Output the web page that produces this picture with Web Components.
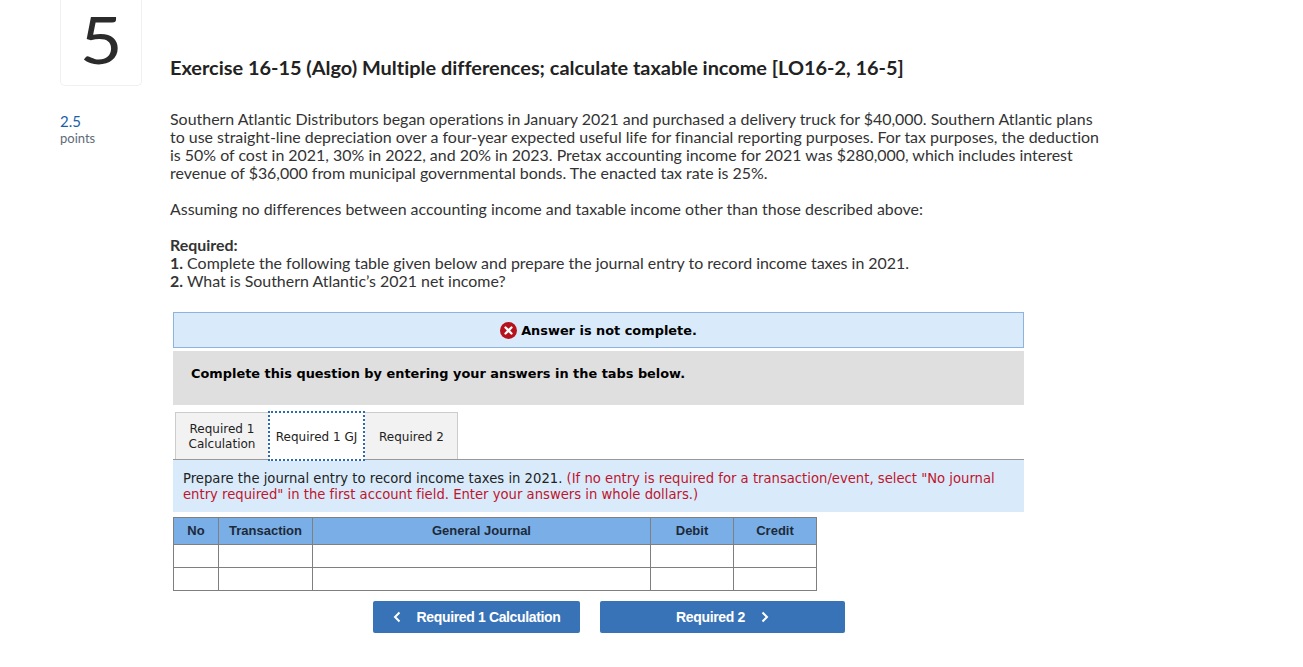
<!DOCTYPE html>
<html>
<head>
<meta charset="utf-8">
<title>Exercise 16-15</title>
<style>
  html, body { margin: 0; background: #fff; }
  body { font-family: "Lato", "Open Sans", sans-serif; font-variant-ligatures: none; color: #333; overflow: hidden; }
</style>
</head>
<body>
<question-page>
  <question-side slot="side" number="5" value="2.5"></question-side>
  <span slot="title">Exercise 16-15 (Algo) Multiple differences; calculate taxable income [LO16-2, 16-5]</span>
  <question-text>
    <p>Southern Atlantic Distributors began operations in January 2021 and purchased a delivery truck for $40,000. Southern Atlantic plans<br>to use straight-line depreciation over a four-year expected useful life for financial reporting purposes. For tax purposes, the deduction<br>is 50% of cost in 2021, 30% in 2022, and 20% in 2023. Pretax accounting income for 2021 was $280,000, which includes interest<br>revenue of $36,000 from municipal governmental bonds. The enacted tax rate is 25%.</p>
    <p>Assuming no differences between accounting income and taxable income other than those described above:</p>
    <p><b>Required:</b><br><b>1.</b> Complete the following table given below and prepare the journal entry to record income taxes in 2021.<br><b>2.</b> What is Southern Atlantic’s 2021 net income?</p>
  </question-text>
  <answer-panel>
    <answer-tabs></answer-tabs>
    <journal-table></journal-table>
  </answer-panel>
</question-page>

<script>
class QuestionPage extends HTMLElement {
  constructor() {
    super();
    this.attachShadow({ mode: 'open' });
    this.shadowRoot.innerHTML = `
    <style>
      :host { display: grid; grid-template-columns: 110px 960px; padding-left: 60px; }
      .title {
        margin: 56px 0 0;
        height: 54px;
        font-size: 19.9px;
        line-height: 23px;
        font-weight: 700;
        color: #222;
      }
    </style>
    <div><slot name="side"></slot></div>
    <div>
      <h1 class="title"><slot name="title"></slot></h1>
      <slot></slot>
    </div>
    `;
  }
}

class QuestionSide extends HTMLElement {
  constructor() {
    super();
    this.attachShadow({ mode: 'open' });
    this.shadowRoot.innerHTML = `
    <style>
      :host { display: block; width: 82px; }
      .number {
        box-sizing: border-box;
        height: 86px;
        padding-bottom: 8px;
        display: flex;
        align-items: center;
        justify-content: center;
        border: 1px solid #f0f0f0;
        border-top: 0;
        border-radius: 0 0 5px 5px;
        font-size: 66px;
        color: #2b2b2b;
      }
      .number span { display: block; transform: scaleX(1.12); }
      .value { margin-top: 26px; font-size: 15px; line-height: 18px; color: #1b5fa8; }
      .unit { font-size: 13px; line-height: 17px; color: #5e6b78; }
    </style>
    <div class="number"><span></span></div>
    <div class="value"></div>
    <div class="unit">points</div>
    `;
  }

  connectedCallback() {
    this.shadowRoot.querySelector('.number span').textContent = this.getAttribute('number');
    this.shadowRoot.querySelector('.value').textContent = this.getAttribute('value');
  }
}

class QuestionText extends HTMLElement {
  constructor() {
    super();
    this.attachShadow({ mode: 'open' });
    this.shadowRoot.innerHTML = `
    <style>
      :host { display: block; font-size: 15.95px; line-height: 18px; color: #333; }
      ::slotted(p) { margin: 0 0 18px; }
    </style>
    <slot></slot>
    `;
  }
}

class AnswerPanel extends HTMLElement {
  constructor() {
    super();
    this.attachShadow({ mode: 'open' });
    this.shadowRoot.innerHTML = `
    <style>
      :host { display: block; width: 851px; margin: 22px 0 0 3px; font-family: "DejaVu Sans", Verdana, sans-serif; color: #000; }
      .alert {
        box-sizing: border-box;
        height: 36px;
        display: flex;
        align-items: center;
        justify-content: center;
        gap: 4px;
        background: #d9ebfa;
        border: 1px solid #8db4dc;
        font-size: 12.9px;
        font-weight: 700;
      }
      .prompt {
        box-sizing: border-box;
        height: 54px;
        margin: 3px 0 7px;
        padding: 15px 18px;
        background: #dfdfdf;
        font-size: 12.9px;
        line-height: 16px;
        font-weight: 700;
      }
      svg { display: block; }
    </style>
    <div class="alert">
      <svg width="17" height="17" viewBox="0 0 16 16"><circle cx="8" cy="8" r="8" fill="#b5121b"/><path d="M5.2 5.2l5.6 5.6M10.8 5.2l-5.6 5.6" stroke="#fff" stroke-width="2.2" stroke-linecap="round"/></svg>
      <span>Answer is not complete.</span>
    </div>
    <div class="prompt">Complete this question by entering your answers in the tabs below.</div>
    <slot></slot>
    `;
  }
}

class AnswerTabs extends HTMLElement {
  constructor() {
    super();
    this.attachShadow({ mode: 'open' });
    this.shadowRoot.innerHTML = `
    <style>
      :host { display: block; font-family: "DejaVu Sans", Verdana, sans-serif; font-size: 12px; line-height: 15px; color: #222; }
      .tabs { display: flex; height: 47px; padding-left: 2px; border-bottom: 1px solid #999; }
      .tab {
        box-sizing: border-box;
        height: 47px;
        padding-top: 1px;
        display: flex;
        align-items: center;
        justify-content: center;
        text-align: center;
        background: #f2f2f2;
        border: 1px solid #ccc;
        border-bottom: 0;
      }
      .first { width: 94px; }
      .active {
        position: relative;
        z-index: 1;
        width: 97px;
        height: 50px;
        margin: -1px 0 0 -1px;
        padding-top: 2px;
        background: #fff;
        border: 2px dotted #2f69b2;
        white-space: nowrap;
      }
      .last { width: 94px; margin-left: -1px; padding: 3px 0 0 1px; }
    </style>
    <div class="tabs">
      <div class="tab first">Required 1<br>Calculation</div>
      <div class="tab active">Required 1 GJ</div>
      <div class="tab last">Required 2</div>
    </div>
    `;
  }
}

class JournalTable extends HTMLElement {
  constructor() {
    super();
    this.attachShadow({ mode: 'open' });
    this.shadowRoot.innerHTML = `
    <style>
      :host { display: block; }
      .note {
        box-sizing: border-box;
        height: 52px;
        padding: 11px 10px 0;
        background: #d9ebfa;
        font-family: "DejaVu Sans", Verdana, sans-serif;
        font-size: 13.2px;
        line-height: 16px;
        color: #222;
      }
      .note em { font-style: normal; color: #c0142c; }
      table {
        margin-top: 5px;
        width: 643px;
        border-collapse: collapse;
        table-layout: fixed;
        font-family: "Liberation Sans", Arial, sans-serif;
      }
      th, td { border: 1px solid #7f7f7f; padding: 0; }
      th { height: 24px; padding-bottom: 2px; background: #7aaee6; font-size: 13px; font-weight: 700; color: #1c2a3a; }
      td { height: 22px; }
      .nav { display: flex; gap: 20px; margin: 10px 0 0 200px; }
      .nav button {
        height: 32px;
        display: flex;
        align-items: center;
        justify-content: center;
        gap: 16px;
        padding: 0;
        border: 0;
        border-radius: 2px;
        background: #3973b7;
        color: #fff;
        font-family: "Liberation Sans", Arial, sans-serif;
        font-size: 14px;
        letter-spacing: -0.36px;
        font-weight: 700;
      }
      .prev { width: 207px; }
      .next { width: 245px; }
    </style>
    <div class="note">Prepare the journal entry to record income taxes in 2021. <em>(If no entry is required for a transaction/event, select "No journal<br>entry required" in the first account field. Enter your answers in whole dollars.)</em></div>
    <table>
      <colgroup><col style="width:45px"><col style="width:94px"><col style="width:338px"><col style="width:83px"><col style="width:83px"></colgroup>
      <tr><th>No</th><th>Transaction</th><th>General Journal</th><th>Debit</th><th>Credit</th></tr>
      <tr><td></td><td></td><td></td><td></td><td></td></tr>
      <tr><td></td><td></td><td></td><td></td><td></td></tr>
    </table>
    <div class="nav">
      <button class="prev"><svg width="8" height="12" viewBox="0 0 8 12"><path d="M6.5 1.5L2 6l4.5 4.5" fill="none" stroke="#fff" stroke-width="2"/></svg>Required 1 Calculation</button>
      <button class="next">Required 2<svg width="8" height="12" viewBox="0 0 8 12"><path d="M1.5 1.5L6 6l-4.5 4.5" fill="none" stroke="#fff" stroke-width="2"/></svg></button>
    </div>
    `;
  }
}

customElements.define('question-page', QuestionPage);
customElements.define('question-side', QuestionSide);
customElements.define('question-text', QuestionText);
customElements.define('answer-panel', AnswerPanel);
customElements.define('answer-tabs', AnswerTabs);
customElements.define('journal-table', JournalTable);
</script>
</body>
</html>
